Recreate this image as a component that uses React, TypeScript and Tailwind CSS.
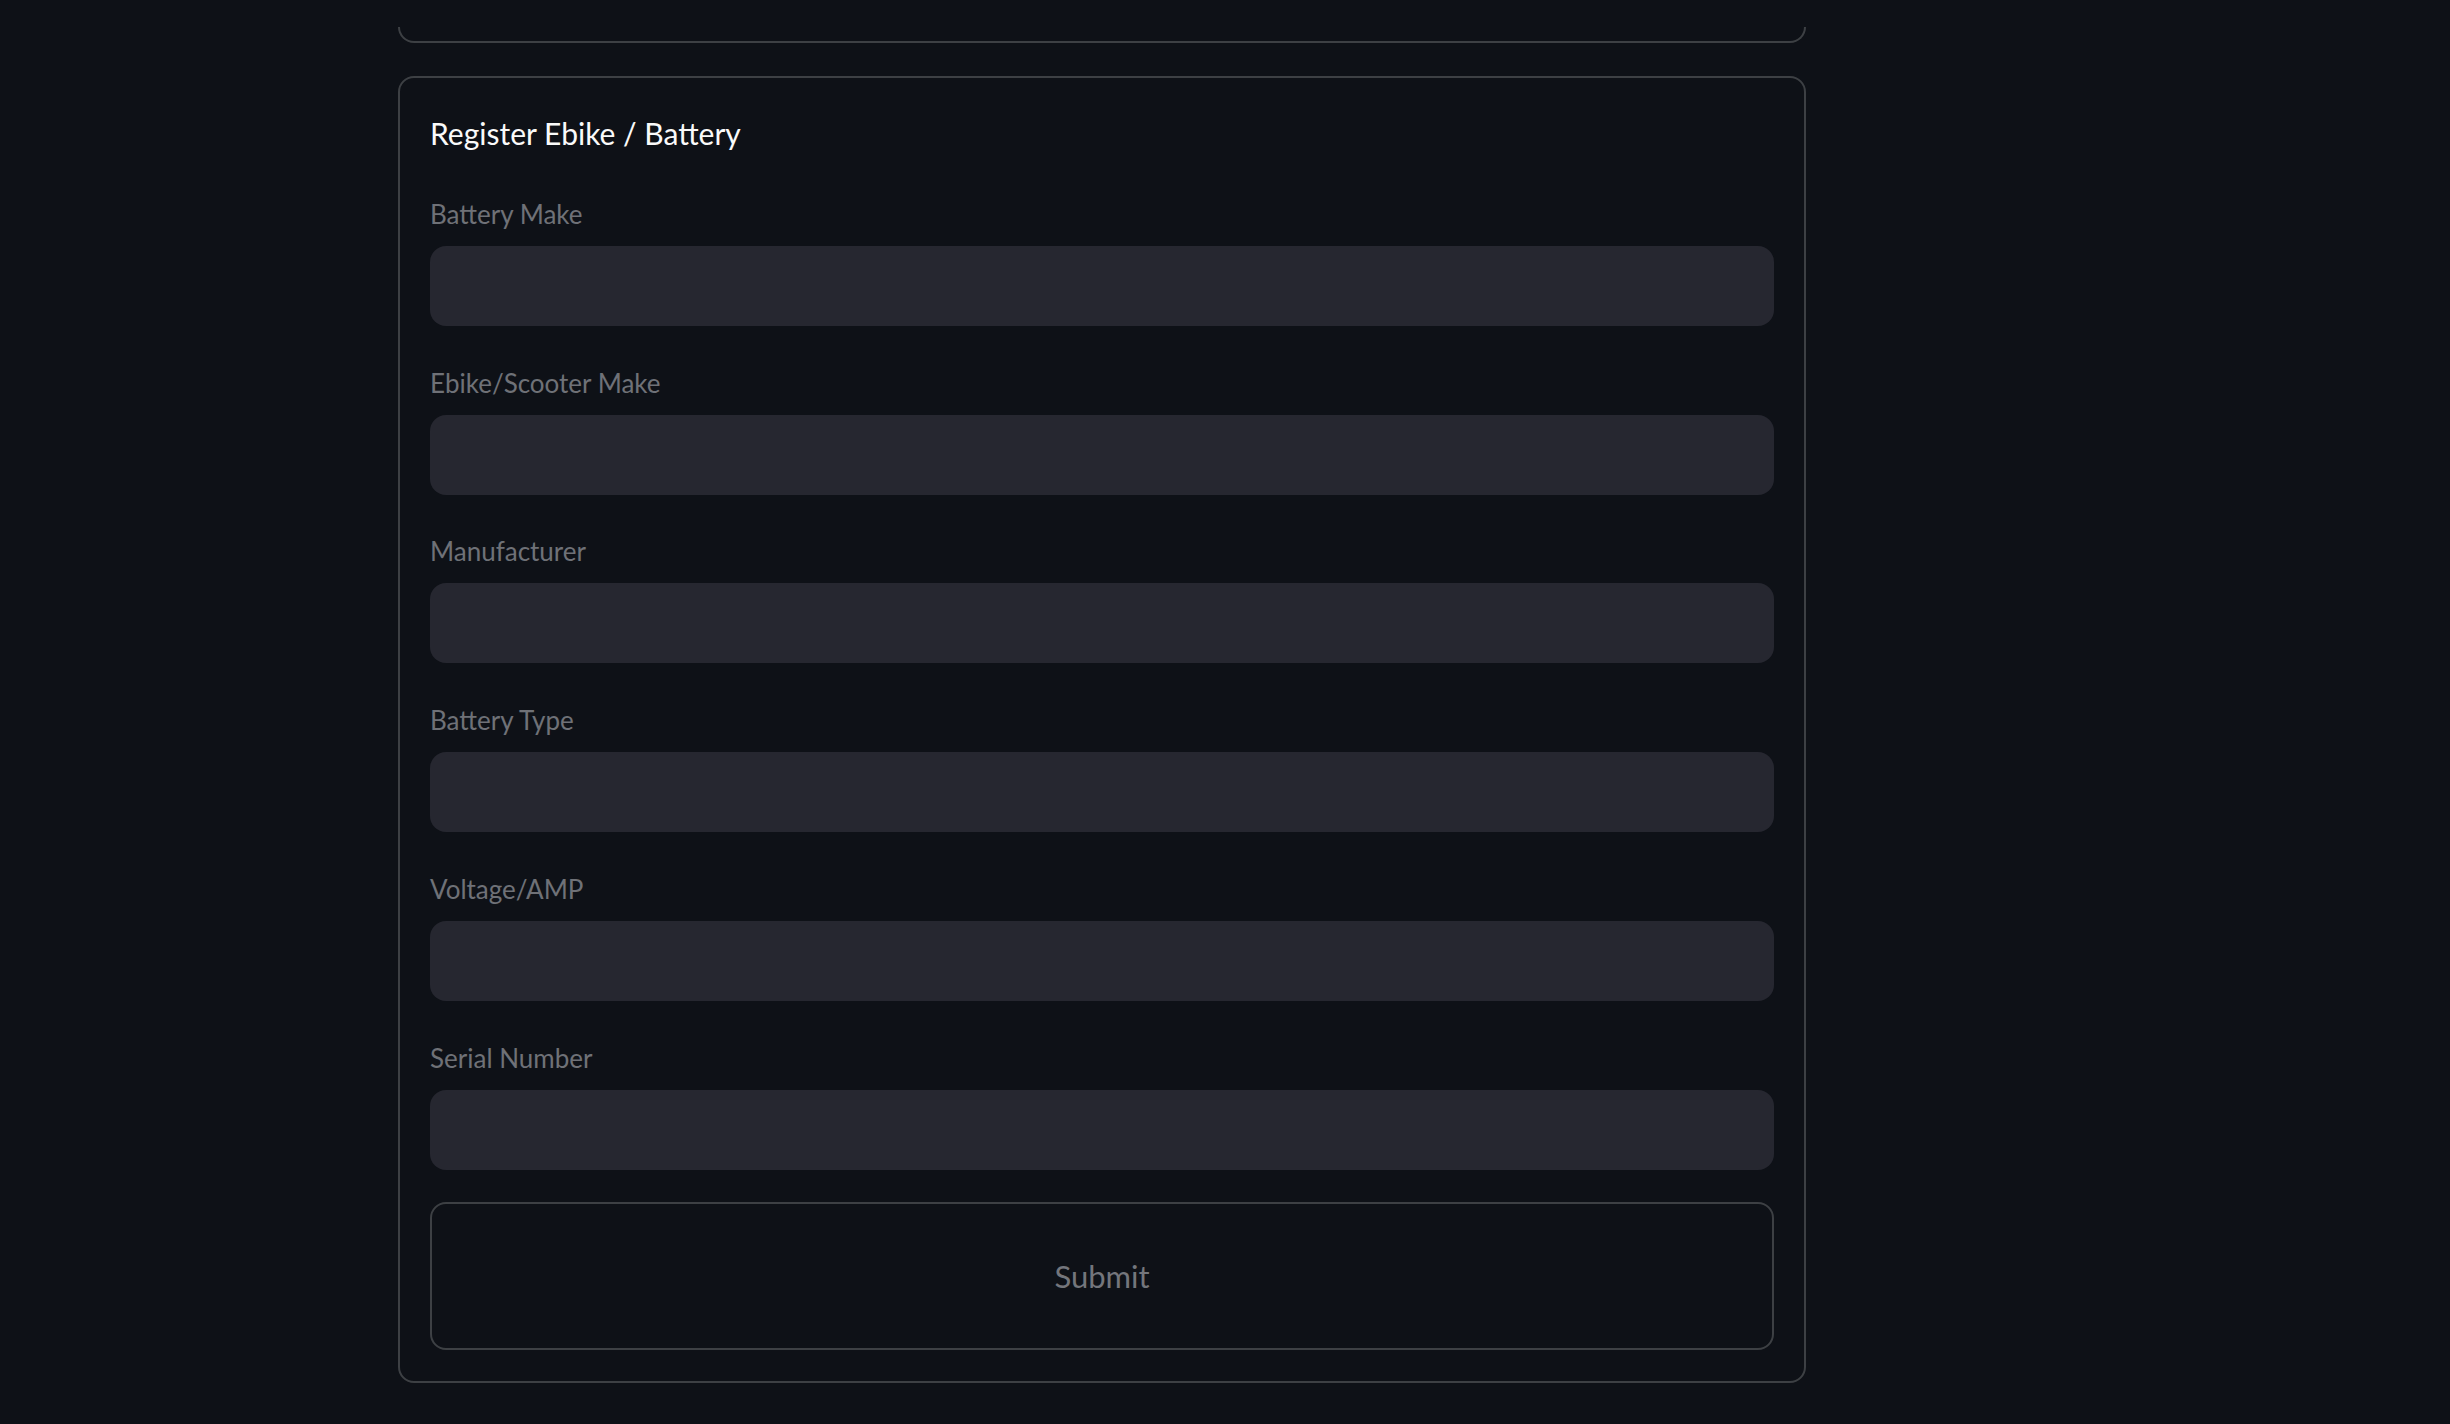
import React from "react";

const fields = ["Battery Make", "Ebike/Scooter Make", "Manufacturer", "Battery Type", "Voltage/AMP", "Serial Number"];

const App: React.FC = () => {
  return (
    <div className="min-h-screen bg-[#0e1117] font-['Lato',sans-serif]">
      <div className="ml-[398px] w-[1408px] pt-[27px]">
        {/* tail of the block above */}
        <div className="h-[16px] border-x-2 border-b-2 border-[#3d4044] rounded-b-[16px]" />

        {/* Form card */}
        <form className="mt-[33px] border-2 border-[#3d4044] rounded-[16px] px-[30px] pt-[31px] pb-[31px] flex flex-col gap-[31.75px]">
          <h2 className="text-[30px] leading-[48px] text-[#fafafa] font-normal">Register Ebike / Battery</h2>

          {fields.map((label) => (
            <div key={label} className="flex flex-col">
              <label className="text-[26px] leading-[50px] mb-[7px] text-[#6f7177]">{label}</label>
              <input type="text" className="h-[80px] w-full rounded-[16px] bg-[#262730] px-6 text-[26px] text-[#fafafa] outline-none" />
            </div>
          ))}

          <button
            type="button"
            className="mt-[1px] h-[148px] w-full rounded-[16px] border-2 border-[#3d4044] bg-transparent text-[31px] text-[#74767c]"
          >
            Submit
          </button>
        </form>
      </div>
    </div>
  );
};

export default App;
